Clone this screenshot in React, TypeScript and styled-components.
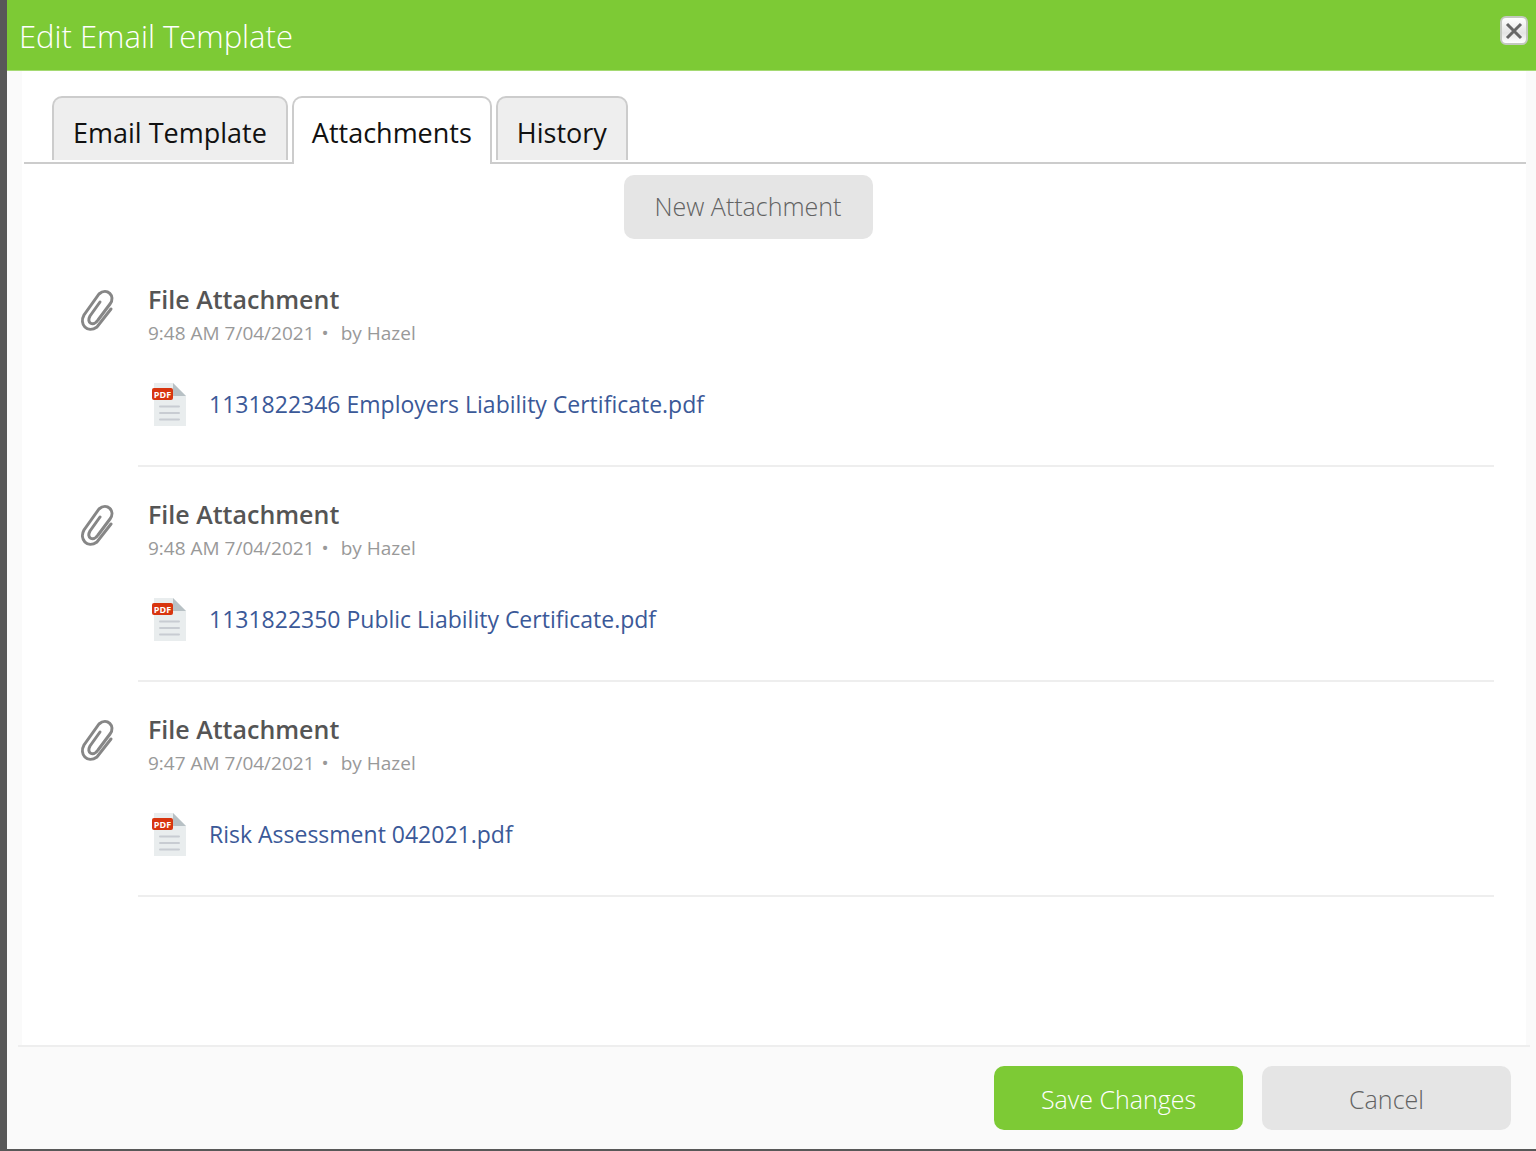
import React, { useState } from "react";
import styled, { createGlobalStyle } from "styled-components";

const GlobalStyle = createGlobalStyle`
  *, *::before, *::after { box-sizing: border-box; }
  body {
    margin: 0;
    background: #585858;
    font-family: "Open Sans", "Noto Sans", sans-serif;
  }
  button { font-family: inherit; cursor: pointer; }
`;

const Backdrop = styled.div`
  min-height: 100vh;
  padding: 0 0 2px 7px;
  display: flex;
  background: #585858;
`;

const Dialog = styled.section`
  flex: 1;
  min-width: 0;
  display: flex;
  flex-direction: column;
  background: #fafafa;
`;

const Header = styled.header`
  display: flex;
  justify-content: space-between;
  align-items: flex-start;
  height: 71px;
  padding: 16px 8px 0 12px;
  background: #7dca35;
  border-bottom: 1px solid #a5da73;
`;

const Title = styled.h1`
  margin: 0;
  font-size: 31px;
  line-height: 40px;
  font-weight: 300;
  color: #fff;
`;

const CloseButton = styled.button`
  width: 28px;
  height: 29px;
  padding: 0;
  display: grid;
  place-items: center;
  border: 2px solid #c4c8c0;
  border-radius: 6px;
  background: linear-gradient(#fff, #e4e4e4 60%, #fff);
`;

const Body = styled.main`
  flex: 1;
  margin: 0 10px 0 15px;
  padding-top: 25px;
  background: #fff;
`;

const TabList = styled.div`
  display: flex;
  align-items: flex-start;
  gap: 4px;
  height: 68px;
  margin-left: 2px;
  padding-left: 28px;
  border-bottom: 2px solid #ccc;
`;

const Tab = styled.button<{ $active: boolean }>`
  height: ${(p) => (p.$active ? 68 : 64)}px;
  padding: ${(p) => (p.$active ? "8px 18px 4px" : "8px 19px 0")};
  border: 2px solid #ccc;
  border-bottom: 0;
  border-radius: 10px 10px 0 0;
  background: ${(p) => (p.$active ? "#fff" : "#eee")};
  font-size: 27px;
  line-height: 36px;
  color: #111;
`;

const Panel = styled.div`
  display: flex;
  flex-direction: column;
  padding: 11px 32px 0 52px;
`;

const ActionButton = styled.button<{ $primary?: boolean }>`
  width: 249px;
  height: 64px;
  padding: 0 0 3px;
  border: 0;
  border-radius: 10px;
  background: ${(p) => (p.$primary ? "#7dca35" : "#e5e5e5")};
  color: ${(p) => (p.$primary ? "#fff" : "#626262")};
  font-size: 25px;
  font-weight: 300;
`;

const FooterButton = styled(ActionButton)`
  padding: 1px 0 0;
`;

const NewRow = styled.div`
  display: flex;
  justify-content: center;
  padding-right: 72px;
`;

const List = styled.ul`
  list-style: none;
  margin: 13px 0 0;
  padding: 0;
`;

const Item = styled.li`
  display: grid;
  grid-template-columns: 64px 1fr;
`;

const ClipCell = styled.div`
  padding: 37px 0 0 6px;
`;

const ItemContent = styled.article`
  padding: 29px 0 38px 10px;
  border-bottom: 2px solid #eee;
`;

const ItemTitle = styled.h2`
  margin: 0;
  font-size: 25px;
  line-height: 36px;
  font-weight: 600;
  color: #555;
`;

const Meta = styled.p`
  margin: 0;
  display: flex;
  font-size: 19px;
  line-height: 32px;
  color: #999;
`;

const Bullet = styled.span`
  margin: 0 12px 0 7px;
`;

const FileRow = styled.div`
  display: flex;
  align-items: center;
  gap: 22px;
  margin-top: 32px;
  padding-left: 3px;
  height: 46px;
`;

const FileLink = styled.a`
  font-size: 23px;
  line-height: 32px;
  color: #3b5998;
  text-decoration: none;
`;

const Footer = styled.footer`
  display: flex;
  justify-content: flex-end;
  gap: 19px;
  margin: 0 6px 0 11px;
  padding: 19px;
  border-top: 2px solid #eee;
`;

const ClipIcon = () => (
  <svg width="36" height="44" viewBox="0 0 36 44" fill="none" stroke="#868686" strokeWidth="3" strokeLinecap="round" aria-hidden="true">
    <path d="M20 13 L10 27 C6 34 13 38 18 31 L30 15 C36 7 27 -2 19 5 L4 26 C-1 35 7 45 17 38 L31 20" />
  </svg>
);

const PdfIcon = () => (
  <svg width="36" height="46" viewBox="0 -1 36 46" aria-hidden="true">
    <path d="M3 1H22L35 14V44H3Z" fill="#e9edee" />
    <path d="M22 1L35 14H22Z" fill="#b8c1c5" />
    <path d="M9 24.500H28M9 31H28M9 37.500H28" stroke="#c8ccd2" strokeWidth="2" strokeLinecap="round" />
    <rect x="1" y="6" width="21" height="12" rx="2" fill="#d8350f" />
    <text x="11.500" y="15.500" textAnchor="middle" fontSize="9" fontWeight="700" fill="#fff" fontFamily="Open Sans, sans-serif">PDF</text>
  </svg>
);

const CloseIcon = () => (
  <svg width="18" height="18" viewBox="0 0 18 18" stroke="#666" strokeWidth="3" aria-hidden="true">
    <path d="M2 2L16 16M16 2L2 16" />
  </svg>
);

const tabs = ["Email Template", "Attachments", "History"];

const attachments = [
  { time: "9:48 AM 7/04/2021", file: "1131822346 Employers Liability Certificate.pdf" },
  { time: "9:48 AM 7/04/2021", file: "1131822350 Public Liability Certificate.pdf" },
  { time: "9:47 AM 7/04/2021", file: "Risk Assessment 042021.pdf" },
];

export default function App() {
  const [active, setActive] = useState("Attachments");
  return (
    <>
      <GlobalStyle />
      <Backdrop>
        <Dialog role="dialog" aria-labelledby="dialog-title">
          <Header>
            <Title id="dialog-title">Edit Email Template</Title>
            <CloseButton type="button" aria-label="Close">
              <CloseIcon />
            </CloseButton>
          </Header>
          <Body>
            <TabList role="tablist">
              {tabs.map((name) => (
                <Tab key={name} type="button" role="tab" aria-selected={name === active} $active={name === active} onClick={() => setActive(name)}>
                  {name}
                </Tab>
              ))}
            </TabList>
            <Panel role="tabpanel">
              <NewRow>
                <ActionButton type="button">New Attachment</ActionButton>
              </NewRow>
              <List>
                {attachments.map((a) => (
                  <Item key={a.file}>
                    <ClipCell>
                      <ClipIcon />
                    </ClipCell>
                    <ItemContent>
                      <ItemTitle>File Attachment</ItemTitle>
                      <Meta>
                        <span>{a.time}</span>
                        <Bullet>•</Bullet>
                        <span>by Hazel</span>
                      </Meta>
                      <FileRow>
                        <PdfIcon />
                        <FileLink href="#">{a.file}</FileLink>
                      </FileRow>
                    </ItemContent>
                  </Item>
                ))}
              </List>
            </Panel>
          </Body>
          <Footer>
            <FooterButton type="button" $primary>Save Changes</FooterButton>
            <FooterButton type="button">Cancel</FooterButton>
          </Footer>
        </Dialog>
      </Backdrop>
    </>
  );
}
